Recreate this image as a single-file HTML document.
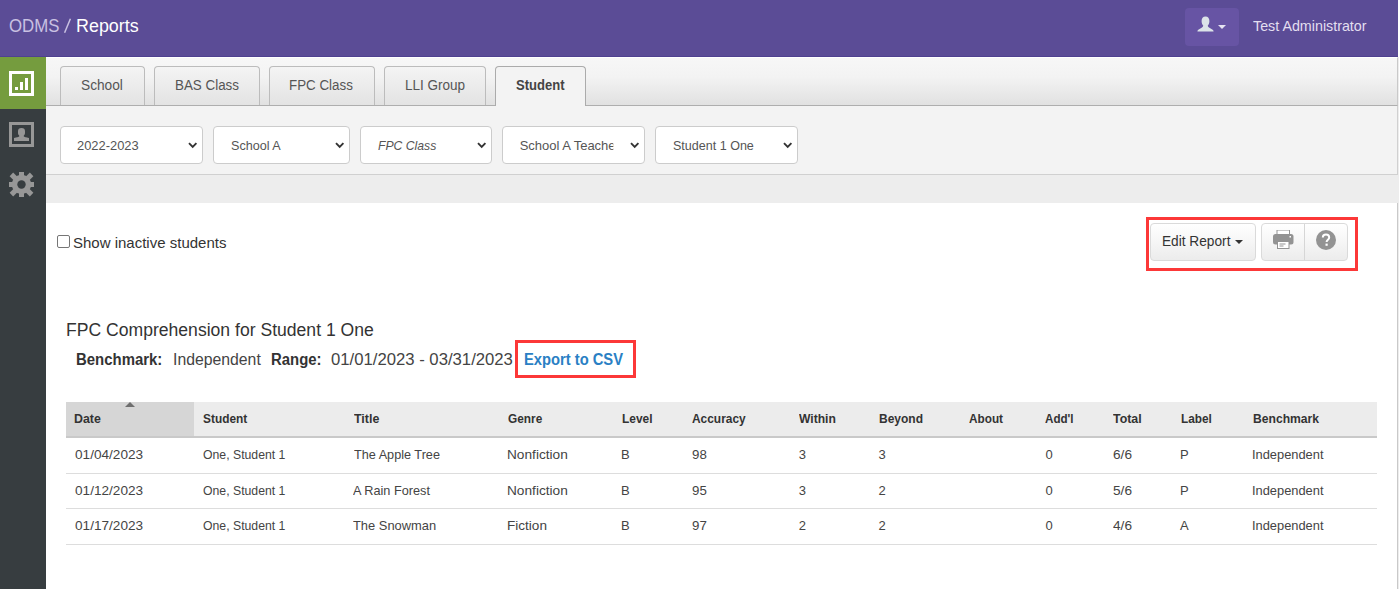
<!DOCTYPE html>
<html>
<head>
<meta charset="utf-8">
<title>ODMS Reports</title>
<style>
*{box-sizing:border-box;margin:0;padding:0}
html,body{width:1399px;height:589px;overflow:hidden;background:#fff}
body{font-family:"Liberation Sans",sans-serif;color:#333;position:relative;font-size:14px}
.abs{position:absolute}
.t{position:absolute;white-space:nowrap;line-height:1;transform-origin:0 0}
/* header */
#hdr{left:0;top:0;width:1398px;height:57px;background:#5b4c96;border-bottom:1px solid #4f4190}
#ubtn{left:1185px;top:8px;width:54px;height:38px;background:#6754a4;border-radius:4px}
/* sidebar */
#side{left:0;top:57px;width:46px;height:532px;background:#373d40}
#act{left:0;top:57px;width:46px;height:52px;background:#759c3e}
/* main */
#tabbar{left:46px;top:57px;width:1352px;height:49px;border-right:1px solid #c9c9c9;background:linear-gradient(#f7f7f7,#f3f3f3 40%,#e1e1e1);border-top:1px solid #fff;border-bottom:1px solid #aeaeae}
.tab{position:absolute;top:66px;height:39px;border:1px solid #bcbcbc;border-bottom:none;border-radius:4px 4px 0 0;background:linear-gradient(#f4f4f4,#e3e3e3)}
.tab.on{background:#f3f3f3;height:40px;border-color:#ababab}
#filt{left:46px;top:106px;width:1352px;height:69px;background:#f3f3f3;border-bottom:1px solid #d0d0d0;border-right:1px solid #d0d0d0}
#strip{left:46px;top:175px;width:1353px;height:28px;background:#ededed}
#redge{left:1397px;top:203px;width:1px;height:386px;background:#c9c9c9}
#redge2{left:1398px;top:57px;width:1px;height:532px;background:#ededed}
.sel{position:absolute;top:126px;height:38px;background:#fff;border:1px solid #ccc;border-radius:4px}
.btn{position:absolute;top:223px;height:38px;border:1px solid #dadada;background:linear-gradient(#fff,#ececec);border-radius:4px}
.red{position:absolute;border:3px solid #fc3838}
/* table */
#thead{left:66px;top:402px;width:1311px;height:34px;background:#ececec}
#thsort{left:66px;top:402px;width:128px;height:34px;background:#d6d6d6}
.hl{position:absolute;left:66px;width:1311px;height:1px;background:#ddd}
.th{font-weight:bold;font-size:13px;top:412px}
.td{font-size:13px}
</style>
</head>
<body>
<!-- header -->
<div id="hdr" class="abs"></div>
<svg class="abs" style="left:62px;top:17px" width="12" height="18" viewBox="0 0 12 18"><path d="M2.600 15.700L8.400 1.800" stroke="#c9c1e2" stroke-width="1.500" fill="none"/></svg>
<div id="ubtn" class="abs"></div>
<svg class="abs" style="left:1197px;top:16px" width="17" height="16" viewBox="0 0 17 16"><path fill="#dce3e8" d="M8.5 0.6C5.9 0.6 4.6 2.6 4.6 5c0 1.900.6 3.600 1.600 4.600 0 .800-.300 1.300-1.200 1.800L1.300 13.700C.700 14.100.400 14.700.400 15.600h16.200c0-.900-.300-1.500-.900-1.900L12 11.400c-.900-.500-1.200-1-1.200-1.800 1-1 1.600-2.700 1.600-4.600 0-2.400-1.300-4.400-3.900-4.400z"/></svg>
<div class="abs" style="left:1218px;top:25px;width:0;height:0;border-left:4px solid transparent;border-right:4px solid transparent;border-top:4px solid #e6e3f2"></div>

<!-- sidebar -->
<div id="side" class="abs"></div>
<div id="act" class="abs"></div>
<svg class="abs" style="left:9px;top:71px" width="25" height="25" viewBox="0 0 25 25"><rect x="1.500" y="1.500" width="22" height="22" fill="none" stroke="#fff" stroke-width="3"/><rect x="6" y="16" width="3" height="3" fill="#fff"/><rect x="11" y="11" width="3" height="8" fill="#fff"/><rect x="16" y="7" width="3" height="12" fill="#fff"/></svg>
<svg class="abs" style="left:9px;top:122px" width="25" height="25" viewBox="0 0 25 25"><rect x="1.500" y="1.500" width="22" height="22" fill="none" stroke="#979797" stroke-width="3"/><path fill="#979797" d="M9 9.300a3.500 3.300 0 0 1 7 0v1.700c0 1.200-.500 2-1.200 2.600v1l1.700.600h.500l3 .800v3h-15v-3l3-.800h.500l1.700-.600v-1c-.700-.600-1.200-1.400-1.200-2.600z"/></svg>
<svg class="abs" style="left:9px;top:172px" width="25" height="25" viewBox="0 0 25 25"><g fill="#979797"><rect x="10" y="0" width="5" height="25"/><rect x="0" y="10" width="25" height="5"/><rect x="10" y="-1.800" width="5" height="28.600" transform="rotate(45 12.500 12.500)"/><rect x="10" y="-1.800" width="5" height="28.600" transform="rotate(-45 12.500 12.500)"/><circle cx="12.500" cy="12.500" r="9.700"/></g><circle cx="12.500" cy="12.500" r="4.200" fill="#373d40"/></svg>

<!-- tab bar -->
<div id="tabbar" class="abs"></div>
<div class="tab" style="left:60px;width:85px"></div>
<div class="tab" style="left:154px;width:106px"></div>
<div class="tab" style="left:269px;width:106px"></div>
<div class="tab" style="left:384px;width:102px"></div>
<div id="filt" class="abs"></div>
<div class="tab on" style="left:495px;width:91px"></div>

<!-- filters -->
<div id="strip" class="abs"></div>
<div id="redge" class="abs"></div>
<div id="redge2" class="abs"></div>
<div class="sel" style="left:60px;width:143px"></div>
<div class="sel" style="left:213px;width:137px"></div>
<div class="sel" style="left:360px;width:132px"></div>
<div class="sel" style="left:502px;width:143px"></div>
<div class="sel" style="left:655px;width:143px"></div>

<svg class="abs chev" style="left:188px;top:142px" width="10" height="7" viewBox="0 0 10 7"><path d="M1 1.200L4.700 4.900L8.400 1.200" fill="none" stroke="#333" stroke-width="1.900"/></svg>
<svg class="abs chev" style="left:335px;top:142px" width="10" height="7" viewBox="0 0 10 7"><path d="M1 1.200L4.700 4.900L8.400 1.200" fill="none" stroke="#333" stroke-width="1.900"/></svg>
<svg class="abs chev" style="left:477px;top:142px" width="10" height="7" viewBox="0 0 10 7"><path d="M1 1.200L4.700 4.900L8.400 1.200" fill="none" stroke="#333" stroke-width="1.900"/></svg>
<svg class="abs chev" style="left:630px;top:142px" width="10" height="7" viewBox="0 0 10 7"><path d="M1 1.200L4.700 4.900L8.400 1.200" fill="none" stroke="#333" stroke-width="1.900"/></svg>
<svg class="abs chev" style="left:783px;top:142px" width="10" height="7" viewBox="0 0 10 7"><path d="M1 1.200L4.700 4.900L8.400 1.200" fill="none" stroke="#333" stroke-width="1.900"/></svg>
<!-- checkbox row -->
<div class="abs" style="left:57px;top:235px;width:13px;height:13px;border:1px solid #767676;border-radius:2px;background:#fff"></div>

<!-- buttons -->
<div class="red" style="left:1146px;top:217px;width:212px;height:54px"></div>
<div class="btn" style="left:1150px;width:106px"></div>
<div class="btn" style="left:1261px;width:87px"></div>
<div class="abs" style="left:1304px;top:224px;width:1px;height:36px;background:#d6d6d6"></div>
<div class="abs" style="left:1235px;top:240px;width:0;height:0;border-left:4px solid transparent;border-right:4px solid transparent;border-top:4px solid #333"></div>
<svg class="abs" style="left:1273px;top:230px" width="21" height="19" viewBox="0 0 21 19"><rect x="4" y="0" width="12.500" height="5" fill="#fff" stroke="#939393" stroke-width="1"/><rect x="0" y="4" width="20.500" height="10.500" rx="2.500" fill="#939393"/><rect x="4.500" y="11.500" width="11.500" height="7" fill="#fff" stroke="#939393" stroke-width="1"/><rect x="6.500" y="13.500" width="6" height="1" fill="#939393"/><rect x="6.500" y="15.500" width="4" height="1" fill="#939393"/><rect x="16.500" y="6" width="1.500" height="1.500" fill="#fff"/></svg>
<svg class="abs" style="left:1316px;top:230px" width="20" height="20" viewBox="0 0 20 20"><circle cx="10" cy="10" r="10" fill="#939393"/><path d="M6.800 7.600C6.800 5.700 8.200 4.600 10 4.600s3.200 1.100 3.200 2.800c0 2.200-2.600 2.400-2.600 4.600" fill="none" stroke="#fff" stroke-width="2"/><rect x="9.500" y="13.600" width="2.200" height="2.200" fill="#fff"/></svg>

<!-- titles -->
<div class="red" style="left:515px;top:340px;width:121px;height:38px"></div>

<!-- table -->
<div id="thead" class="abs"></div>
<div id="thsort" class="abs"></div>
<div class="abs" style="left:66px;top:436px;width:1311px;height:2px;background:#c9c9c9"></div>
<div class="abs" style="left:125px;top:402px;width:0;height:0;border-left:5px solid transparent;border-right:5px solid transparent;border-bottom:5px solid #6f6f6f"></div>
<div class="hl" style="top:473px"></div>
<div class="hl" style="top:508px"></div>
<div class="hl" style="top:544px"></div>
<div class="t" id="odms" style="left:9.20px;top:17px;font-size:18px;transform:scaleX(0.9333);color:#c9c1e2;">ODMS</div>
<div class="t" id="reports" style="left:75.76px;top:17px;font-size:18px;transform:scaleX(0.9944);color:#fff;">Reports</div>
<div class="t" id="admin" style="left:1253.20px;top:18px;font-size:15px;transform:scaleX(0.9525);color:#e3dff0;">Test Administrator</div>
<div class="t" id="t1" style="left:81.30px;top:78px;font-size:14px;transform:scaleX(0.9791);color:#555;">School</div>
<div class="t" id="t2" style="left:174.54px;top:78px;font-size:14px;transform:scaleX(0.9561);color:#555;">BAS Class</div>
<div class="t" id="t3" style="left:289.35px;top:78px;font-size:14px;transform:scaleX(0.9545);color:#555;">FPC Class</div>
<div class="t" id="t4" style="left:404.53px;top:78px;font-size:14px;transform:scaleX(0.9656);color:#555;">LLI Group</div>
<div class="t" id="t5" style="left:515.90px;top:78px;font-size:14px;transform:scaleX(0.9302);color:#444;font-weight:bold;">Student</div>
<div class="t" id="s1" style="left:77.20px;top:139px;font-size:13px;transform:scaleX(0.9919);color:#555;">2022-2023</div>
<div class="t" id="s2" style="left:230.50px;top:139px;font-size:13px;transform:scaleX(0.9692);color:#555;">School A</div>
<div class="t" id="s3" style="left:378.20px;top:139px;font-size:13px;transform:scaleX(0.9387);color:#555;font-style:italic;">FPC Class</div>
<div class="t" id="s4" style="left:519.70px;top:139px;font-size:13px;color:#555;clip-path:inset(0 6.6px 0 0);">School A Teacher</div>
<div class="t" id="s5" style="left:672.80px;top:139px;font-size:13px;transform:scaleX(0.9643);color:#555;">Student 1 One</div>
<div class="t" id="show" style="left:73.00px;top:235px;font-size:15px;color:#333;">Show inactive students</div>
<div class="t" id="edit" style="left:1161.92px;top:234px;font-size:14px;transform:scaleX(0.9771);color:#333;">Edit Report</div>
<div class="t" id="title" style="left:66.12px;top:321px;font-size:18px;transform:scaleX(0.9766);color:#333;">FPC Comprehension for Student 1 One</div>
<div class="t" id="bench" style="left:76.13px;top:352px;font-size:16px;transform:scaleX(0.9334);color:#333;font-weight:bold;">Benchmark:</div>
<div class="t" id="indep" style="left:172.71px;top:352px;font-size:16px;transform:scaleX(0.9864);color:#444;">Independent</div>
<div class="t" id="range" style="left:270.67px;top:352px;font-size:16px;transform:scaleX(0.9308);color:#333;font-weight:bold;">Range:</div>
<div class="t" id="dates" style="left:331.40px;top:352px;font-size:16px;transform:scaleX(1.0431);color:#444;">01/01/2023 - 03/31/2023</div>
<div class="t" id="export" style="left:523.58px;top:352px;font-size:16px;transform:scaleX(0.9206);color:#2a7fc4;font-weight:bold;">Export to CSV</div>
<div class="t" id="h0" style="left:74.30px;top:412px;font-size:13px;transform:scaleX(0.9500);color:#333;font-weight:bold;">Date</div>
<div class="t" id="h1" style="left:203.00px;top:412px;font-size:13px;transform:scaleX(0.9143);color:#333;font-weight:bold;">Student</div>
<div class="t" id="h2" style="left:353.60px;top:412px;font-size:13px;transform:scaleX(0.9556);color:#333;font-weight:bold;">Title</div>
<div class="t" id="h3" style="left:507.70px;top:412px;font-size:13px;transform:scaleX(0.9105);color:#333;font-weight:bold;">Genre</div>
<div class="t" id="h4" style="left:622.10px;top:412px;font-size:13px;transform:scaleX(0.9182);color:#333;font-weight:bold;">Level</div>
<div class="t" id="h5" style="left:692.40px;top:412px;font-size:13px;transform:scaleX(0.9169);color:#333;font-weight:bold;">Accuracy</div>
<div class="t" id="h6" style="left:798.80px;top:412px;font-size:13px;transform:scaleX(0.9308);color:#333;font-weight:bold;">Within</div>
<div class="t" id="h7" style="left:878.60px;top:412px;font-size:13px;transform:scaleX(0.9234);color:#333;font-weight:bold;">Beyond</div>
<div class="t" id="h8" style="left:968.60px;top:412px;font-size:13px;transform:scaleX(0.9053);color:#333;font-weight:bold;">About</div>
<div class="t" id="h9" style="left:1045.30px;top:412px;font-size:13px;transform:scaleX(0.8938);color:#333;font-weight:bold;">Add'l</div>
<div class="t" id="h10" style="left:1113.00px;top:412px;font-size:13px;transform:scaleX(0.9533);color:#333;font-weight:bold;">Total</div>
<div class="t" id="h11" style="left:1180.80px;top:412px;font-size:13px;transform:scaleX(0.9088);color:#333;font-weight:bold;">Label</div>
<div class="t" id="h12" style="left:1252.60px;top:412px;font-size:13px;transform:scaleX(0.9324);color:#333;font-weight:bold;">Benchmark</div>
<div class="t" id="c0_0" style="left:74.90px;top:448px;font-size:13px;transform:scaleX(1.0462);color:#444;">01/04/2023</div>
<div class="t" id="c0_1" style="left:203.00px;top:448px;font-size:13px;transform:scaleX(0.9425);color:#444;">One, Student 1</div>
<div class="t" id="c0_2" style="left:353.60px;top:448px;font-size:13px;transform:scaleX(0.9750);color:#444;">The Apple Tree</div>
<div class="t" id="c0_3" style="left:506.65px;top:448px;font-size:13px;transform:scaleX(1.0518);color:#444;">Nonfiction</div>
<div class="t" id="c0_4" style="left:620.95px;top:448px;font-size:13px;color:#444;">B</div>
<div class="t" id="c0_5" style="left:692.40px;top:448px;font-size:13px;transform:scaleX(1.0214);color:#444;">98</div>
<div class="t" id="c0_6" style="left:798.80px;top:448px;font-size:13px;color:#444;">3</div>
<div class="t" id="c0_7" style="left:878.60px;top:448px;font-size:13px;color:#444;">3</div>
<div class="t" id="c0_9" style="left:1045.60px;top:448px;font-size:13px;color:#444;">0</div>
<div class="t" id="c0_10" style="left:1113.30px;top:448px;font-size:13px;transform:scaleX(1.0500);color:#444;">6/6</div>
<div class="t" id="c0_11" style="left:1180.00px;top:448px;font-size:13px;color:#444;">P</div>
<div class="t" id="c0_12" style="left:1251.91px;top:448px;font-size:13px;transform:scaleX(0.9889);color:#444;">Independent</div>
<div class="t" id="c1_0" style="left:74.90px;top:484px;font-size:13px;transform:scaleX(1.0462);color:#444;">01/12/2023</div>
<div class="t" id="c1_1" style="left:203.00px;top:484px;font-size:13px;transform:scaleX(0.9425);color:#444;">One, Student 1</div>
<div class="t" id="c1_2" style="left:353.00px;top:484px;font-size:13px;transform:scaleX(0.9772);color:#444;">A Rain Forest</div>
<div class="t" id="c1_3" style="left:506.65px;top:484px;font-size:13px;transform:scaleX(1.0518);color:#444;">Nonfiction</div>
<div class="t" id="c1_4" style="left:620.95px;top:484px;font-size:13px;color:#444;">B</div>
<div class="t" id="c1_5" style="left:692.40px;top:484px;font-size:13px;transform:scaleX(1.0214);color:#444;">95</div>
<div class="t" id="c1_6" style="left:798.80px;top:484px;font-size:13px;color:#444;">3</div>
<div class="t" id="c1_7" style="left:878.60px;top:484px;font-size:13px;color:#444;">2</div>
<div class="t" id="c1_9" style="left:1045.60px;top:484px;font-size:13px;color:#444;">0</div>
<div class="t" id="c1_10" style="left:1113.30px;top:484px;font-size:13px;transform:scaleX(1.0500);color:#444;">5/6</div>
<div class="t" id="c1_11" style="left:1180.00px;top:484px;font-size:13px;color:#444;">P</div>
<div class="t" id="c1_12" style="left:1251.91px;top:484px;font-size:13px;transform:scaleX(0.9889);color:#444;">Independent</div>
<div class="t" id="c2_0" style="left:74.90px;top:519px;font-size:13px;transform:scaleX(1.0462);color:#444;">01/17/2023</div>
<div class="t" id="c2_1" style="left:203.00px;top:519px;font-size:13px;transform:scaleX(0.9425);color:#444;">One, Student 1</div>
<div class="t" id="c2_2" style="left:353.00px;top:519px;font-size:13px;transform:scaleX(0.9916);color:#444;">The Snowman</div>
<div class="t" id="c2_3" style="left:506.96px;top:519px;font-size:13px;transform:scaleX(1.0432);color:#444;">Fiction</div>
<div class="t" id="c2_4" style="left:620.95px;top:519px;font-size:13px;color:#444;">B</div>
<div class="t" id="c2_5" style="left:692.40px;top:519px;font-size:13px;transform:scaleX(1.0214);color:#444;">97</div>
<div class="t" id="c2_6" style="left:798.80px;top:519px;font-size:13px;color:#444;">2</div>
<div class="t" id="c2_7" style="left:878.60px;top:519px;font-size:13px;color:#444;">2</div>
<div class="t" id="c2_9" style="left:1045.60px;top:519px;font-size:13px;color:#444;">0</div>
<div class="t" id="c2_10" style="left:1113.30px;top:519px;font-size:13px;transform:scaleX(1.0500);color:#444;">4/6</div>
<div class="t" id="c2_11" style="left:1180.00px;top:519px;font-size:13px;color:#444;">A</div>
<div class="t" id="c2_12" style="left:1251.91px;top:519px;font-size:13px;transform:scaleX(0.9889);color:#444;">Independent</div>
</body>
</html>
